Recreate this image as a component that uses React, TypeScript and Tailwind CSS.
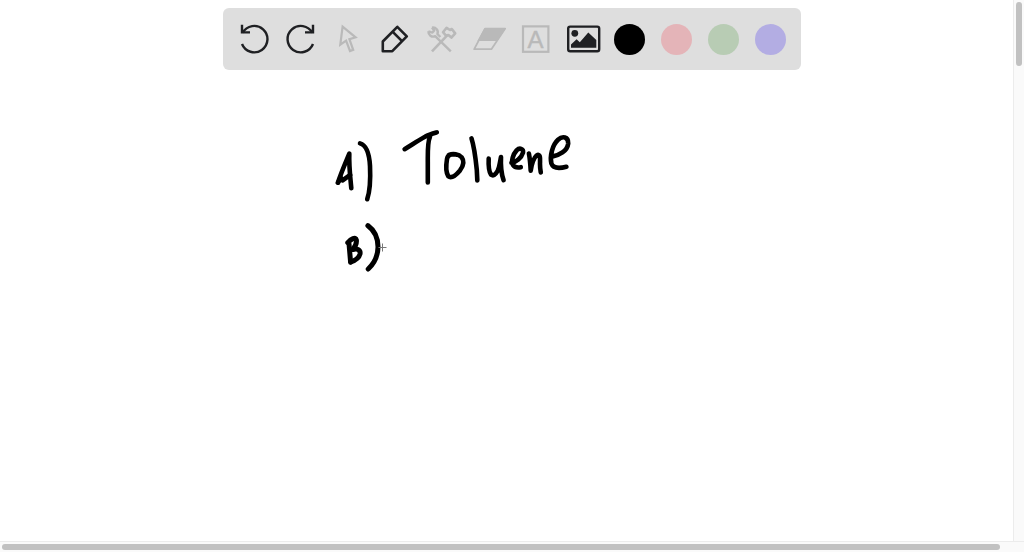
import React, { useState } from 'react'

const DARK = '#1f2023'
const MUTED = '#b9b9b9'

type ToolProps = {
  label: string
  disabled?: boolean
  children: React.ReactNode
}

const Tool = ({ label, disabled, children }: ToolProps) => (
  <button type="button" aria-label={label} disabled={disabled} className="w-[47px] h-[62px] shrink-0">
    <svg viewBox="0 0 47 62" className="w-full h-full" fill="none" stroke={disabled ? MUTED : DARK} strokeWidth="2.4">
      {children}
    </svg>
  </button>
)

const colors = [
  { name: 'Black', className: 'bg-black' },
  { name: 'Red', className: 'bg-[#e4b4b8]' },
  { name: 'Green', className: 'bg-[#b8ccb4]' },
  { name: 'Purple', className: 'bg-[#b3ade3]' },
]

const Toolbar = () => {
  const [color, setColor] = useState('Black')

  return (
    <div role="toolbar" aria-label="Drawing tools" className="relative flex items-center px-[7px] rounded-md bg-[#dedede]">
      <Tool label="Undo">
        <path d="M12.7 24.7A13.2 13.2 0 1 1 12 36" />
        <path d="M12 16.8V24.4H20" />
      </Tool>
      <Tool label="Redo">
        <path d="M35.3 24.7A13.2 13.2 0 1 0 36 36" />
        <path d="M36 16.8V24.4H28" />
      </Tool>
      <Tool label="Select" disabled>
        <path d="M18.6 18.6L31.6 29.3L25.4 31.2L29.2 41.8L26 43L22.1 32.6L16.3 36.6Z" strokeWidth="2.2" />
      </Tool>
      <Tool label="Pen">
        <path d="M26.3 18.8L35.8 28.3L21.3 43.2H11.8V33.5Z" strokeWidth="2.6" strokeLinejoin="round" />
        <path d="M21.5 23.7L31 33.2" strokeWidth="2.6" />
      </Tool>
      <Tool label="Tools" disabled>
        <path d="M10.4 23.4C10.2 27 13.6 29.6 17.2 28.2L32.8 43.4M14 19.6C18 19 20.8 22.4 19.4 26L22.4 29M14 19.6L16.2 22.4L14.4 24.6L10.4 23.4" strokeWidth="2.4" strokeLinejoin="round" />
        <path d="M14 43.4L29.4 27.2" strokeWidth="2.6" />
        <path d="M25 24.2L28.6 19.8L32 22L33.8 21L37.2 25.4L33.4 29.6L30.4 27L28 27.6Z" strokeWidth="2.6" strokeLinejoin="round" />
      </Tool>
      <Tool label="Eraser" disabled>
        <path d="M20 20.6H40.2L26.4 41.2H9.2Z" strokeWidth="1.8" strokeLinejoin="round" />
        <path d="M19.6 20H41L32 33H12.4Z" fill={MUTED} stroke="none" />
      </Tool>
      <Tool label="Text" disabled>
        <rect x="11" y="18.4" width="25.4" height="25.4" strokeWidth="2.2" />
        <text x="23.6" y="39.6" textAnchor="middle" fontFamily="'Liberation Sans', sans-serif" fontSize="24" fill={MUTED} stroke={MUTED} strokeWidth="0.4">A</text>
      </Tool>
      <Tool label="Image">
        <rect x="9.2" y="18.6" width="31" height="24.6" rx="2" />
        <circle cx="15.8" cy="25.3" r="3.4" fill={DARK} stroke="none" />
        <path d="M12 39.7V36.6L17.6 31.2L20.8 34.2L29.3 24.6L37.3 32V39.7Z" fill={DARK} stroke="none" />
      </Tool>
      {colors.map((c) => (
        <label key={c.name} className="w-[47px] flex justify-center shrink-0">
          <input
            type="radio"
            name="color"
            aria-label={c.name}
            checked={color === c.name}
            onChange={() => setColor(c.name)}
            className={`appearance-none w-[31px] h-[31px] rounded-full ${c.className}`}
          />
        </label>
      ))}
    </div>
  )
}

// Pen strokes on the board, in board coordinates
const strokes = [
  // A)
  'M337.9 182.7C341 173 345.4 163 349.3 153.6C348.8 165 350.3 178 351.3 188.2',
  'M337.9 182.7L341 178L342.6 180.4L350.2 174.8',
  'M360 143.4C367 145.4 369.4 155 370 166C370.6 179 370 191 367.2 199.2',
  // Toluene
  'M404.6 149.2C411 145.4 418 140.6 425 136.8C429 134.4 433 133.4 436.8 132.4',
  'M430 136.8C427.4 142 427.8 152 427.8 162V182.4',
  'M456 154.6C451 153.6 447.6 155 447 159C446 165 445.8 172 448.2 176.2C451.6 179 456.6 174.4 460 170.4C463.4 166 464.4 161 461.6 157.2C458.6 154 453 153.4 449 154.8',
  'M471.5 138.4C474.6 148 475.8 160 476.8 170L477.3 180.4',
  'M488.7 158.6C488.4 165 488.4 171 491 174.6C494.4 177 497.8 172 499 167C500 163 500.4 160 501 157C500.6 165 501 173 503.6 180.2',
  'M511.4 162.8C516 162.4 521.4 158 523 152.6C523.6 148.6 519.6 147.4 516.6 150.4C513 154.4 511 161 513 165C515 168 518 167.8 520.8 167.2',
  'M528.9 153.6C530 159 530.4 165 530.7 170.6C531.6 165 533 158.6 536.6 155.4C541 153 540 160 540 164C540 168 540.4 170 540.8 172.4',
  'M552 156.6C559 155.6 567.4 151 568.2 143.4C568.4 136.8 562.6 135.6 558 139.8C552.4 145 549.6 156 551.4 163.6C553.6 169.8 561 168.2 566.4 166.8',
]

const boldStrokes = [
  // B)
  'M349 243.6L350.6 262.2',
  'M347.8 242.6C351 239 355.6 236.6 356.4 240C356.8 243.4 355 247 352.8 249.6C357 248 360.8 250 360 254C359 258 355 260.6 350.8 262',
  'M367.9 225.6C374 230 378 238 378 247C377.8 257 374 263.6 368.2 269',
]

const Board = () => (
  <svg role="img" aria-label="A) Toluene, B)" className="absolute inset-0 w-full h-full" fill="none" stroke="#000" strokeLinecap="round" strokeLinejoin="round">
    <g strokeWidth="4.6">
      {strokes.map((d) => (
        <path key={d} d={d} />
      ))}
    </g>
    <g strokeWidth="5">
      {boldStrokes.map((d) => (
        <path key={d} d={d} />
      ))}
    </g>
    {/* Crosshair pointer */}
    <path d="M378.5 247.5H386.5M382.5 243.5V251.5" stroke="#777" strokeWidth="1" strokeLinecap="butt" />
  </svg>
)

const App = () => {
  return (
    <div className="h-screen flex flex-col overflow-hidden bg-[#fafafa]">
      <div className="flex-1 flex min-h-0">
        <main className="relative flex-1 bg-white">
          <Board />
          {/* Centred on the window, so it makes up for the vertical scrollbar */}
          <div className="flex justify-center pt-2 -mr-[11px]">
            <Toolbar />
          </div>
        </main>
        <div className="w-[11px] border-l border-[#ececec] pt-0.5 flex justify-center">
          <div className="w-1.5 h-16 rounded-full bg-[#c1c1c1]" />
        </div>
      </div>
      <div className="h-[11px] border-t border-[#ececec] pl-0.5 pr-6 flex items-center">
        <div className="flex-1 h-1.5 rounded-full bg-[#c1c1c1]" />
      </div>
    </div>
  )
}

export default App
